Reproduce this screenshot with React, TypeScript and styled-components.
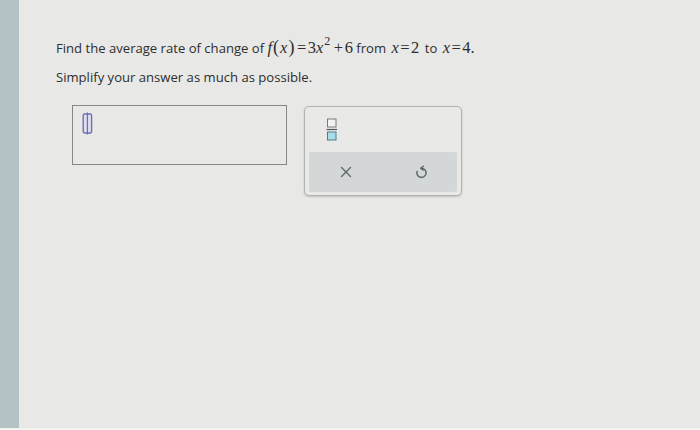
import styled, { createGlobalStyle } from "styled-components";

const GlobalStyle = createGlobalStyle`
    html, body {
        margin: 0;
        padding: 0;
        background: #e8e8e6;
    }
    body {
        font-family: "Open Sans", "Liberation Sans", sans-serif;
        color: #2e2e2e;
    }
`;

const Screen = styled.div`
    display: flex;
    width: 700px;
    height: 428px;
    border-bottom: 2px solid #f3f3f1;
    overflow: hidden;
`;

const SideStrip = styled.div`
    width: 19px;
    flex-shrink: 0;
    background: #b4c1c5;
`;

const Main = styled.div`
    flex: 1;
    display: flex;
    flex-direction: column;
    padding: 38px 0 0 37px;
    background: #e8e8e6;
`;

const Line = styled.div<{ $gap?: number }>`
    font-size: 13.1px;
    line-height: 18px;
    height: 18px;
    white-space: nowrap;
    display: flex;
    align-items: baseline;
    margin-bottom: ${(p) => p.$gap ?? 0}px;
`;

const Math = styled.span<{ $space?: number }>`
    font-family: "Liberation Serif", "DejaVu Serif", serif;
    font-size: 16.5px;
    margin: 0 ${(p) => p.$space ?? 0}px;
`;

const Var = styled.i`
    font-family: "Liberation Serif", serif;
`;

const Paren = styled.span`
    font-size: 18px;
    margin: 0 1px;
`;

const Op = styled.span`
    margin: 0 1.5px;
`;

const Sup = styled.span`
    font-size: 12px;
    position: relative;
    top: -8px;
    margin: 0 2px 0 1px;
`;

const AnswerRow = styled.div`
    display: flex;
    align-items: flex-start;
    margin: 19px 0 0 16px;
    gap: 17px;
`;

const AnswerBox = styled.div`
    width: 215px;
    height: 60px;
    box-sizing: border-box;
    border: 1.5px solid #868686;
    padding: 6px 0 0 9px;
`;

const Palette = styled.div`
    width: 158px;
    height: 90px;
    box-sizing: border-box;
    margin-top: 1px;
    border: 1px solid #b0b2b3;
    border-radius: 5px;
    background: #e9e9e8;
    box-shadow: 0 1px 2px rgba(0, 0, 0, 0.18);
    padding: 0 4px 3px 4px;
    display: flex;
    flex-direction: column;
`;

const PaletteTop = styled.div`
    height: 45px;
    display: flex;
    align-items: center;
    padding-left: 17px;
`;

const ToolBar = styled.div`
    flex: 1;
    background: #d4d7d7;
    border-radius: 2px;
    display: grid;
    grid-template-columns: 74px 76px;
    align-items: center;
    justify-items: center;
`;

const IconButton = styled.button`
    border: none;
    background: none;
    padding: 0;
    display: flex;
    align-items: center;
    justify-content: center;
    color: #5f6668;
`;

function CursorGlyph() {
    return (
        <svg width="11" height="23" viewBox="0 0 11 23">
            <rect x="1.2" y="2" width="8.4" height="19" rx="1.5" fill="#dfe0ee" stroke="#6c70b6" strokeWidth="1.4" />
            <line x1="5.4" y1="0.5" x2="5.4" y2="22.5" stroke="#6c70b6" strokeWidth="1.3" />
        </svg>
    );
}

function FractionIcon() {
    return (
        <svg width="12" height="23" viewBox="0 0 12 23">
            <rect x="1.5" y="1" width="8.5" height="8" fill="#f2f2f2" stroke="#7a7a7a" strokeWidth="1" />
            <line x1="0.5" y1="11.5" x2="11" y2="11.5" stroke="#555" strokeWidth="1.2" />
            <rect x="1.5" y="14" width="8.5" height="8" fill="#a9dde7" stroke="#4f7f8d" strokeWidth="1" />
        </svg>
    );
}

function CloseIcon() {
    return (
        <svg width="12" height="12" viewBox="0 0 12 12">
            <path d="M1.5 1.5 L10.5 10.5 M10.5 1.5 L1.5 10.5" stroke="currentColor" strokeWidth="1.4" fill="none" strokeLinecap="round" />
        </svg>
    );
}

function UndoIcon() {
    return (
        <svg width="12" height="14" viewBox="0 0 12 14">
            <path d="M6.4 3.2 A4.6 4.6 0 1 1 2.1 6.4" stroke="currentColor" strokeWidth="1.5" fill="none" strokeLinecap="round" />
            <path d="M8.3 1.2 L5.6 3.2 L8.3 5.1" stroke="currentColor" strokeWidth="1.4" fill="none" strokeLinecap="round" strokeLinejoin="round" />
        </svg>
    );
}

export default function App() {
    return (
        <>
            <GlobalStyle />
            <Screen>
                <SideStrip />
                <Main>
                    <Line $gap={12}>
                        Find the average rate of change of&nbsp;
                        <Math>
                            <Var>f</Var>
                            <Paren>(</Paren>
                            <Var>x</Var>
                            <Paren>)</Paren>
                            <Op>=</Op>3<Var>x</Var>
                            <Sup>2</Sup>
                            <Op>+</Op>6
                        </Math>
                        &nbsp;from&nbsp;
                        <Math $space={2}>
                            <Var>x</Var>
                            <Op>=</Op>2
                        </Math>
                        &nbsp;to&nbsp;
                        <Math $space={2}>
                            <Var>x</Var>
                            <Op>=</Op>4.
                        </Math>
                    </Line>
                    <Line>Simplify your answer as much as possible.</Line>
                    <AnswerRow>
                        <AnswerBox>
                            <CursorGlyph />
                        </AnswerBox>
                        <Palette>
                            <PaletteTop>
                                <IconButton>
                                    <FractionIcon />
                                </IconButton>
                            </PaletteTop>
                            <ToolBar>
                                <IconButton>
                                    <CloseIcon />
                                </IconButton>
                                <IconButton>
                                    <UndoIcon />
                                </IconButton>
                            </ToolBar>
                        </Palette>
                    </AnswerRow>
                </Main>
            </Screen>
        </>
    );
}
